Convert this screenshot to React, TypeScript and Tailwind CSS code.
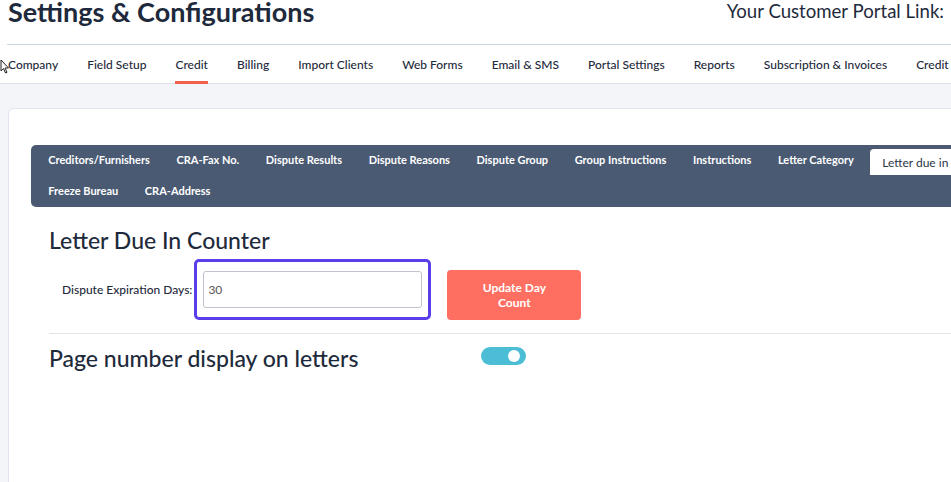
import { useState } from "react"

const mainTabs = [
  "Company",
  "Field Setup",
  "Credit",
  "Billing",
  "Import Clients",
  "Web Forms",
  "Email & SMS",
  "Portal Settings",
  "Reports",
  "Subscription & Invoices",
  "Credit Reports",
]

const creditTabsTop = [
  "Creditors/Furnishers",
  "CRA-Fax No.",
  "Dispute Results",
  "Dispute Reasons",
  "Dispute Group",
  "Group Instructions",
  "Instructions",
  "Letter Category",
]

const creditTabsBottom = ["Freeze Bureau", "CRA-Address"]

const App: React.FunctionComponent = () => {
  const [days, setDays] = useState("30")
  const [pageNumbers, setPageNumbers] = useState(true)

  return (
    <div className="relative h-[482px] w-[951px] overflow-hidden bg-[#f4f5f9] font-['Lato','Noto_Sans',sans-serif] text-[#1e2a3b]">
      {/* header */}
      <div className="bg-white">
        <div className="ml-[7px] flex h-[45px] items-start justify-between border-b border-[#cdd8e4] pl-[1px] pr-[7px]">
          <h1 className="text-[27px] font-bold leading-[24px] whitespace-nowrap">
            Settings &amp; Configurations
          </h1>
          <div className="pt-[1px] text-[18.6px] font-normal leading-[20px] whitespace-nowrap">
            Your Customer Portal Link:
          </div>
        </div>
        <nav className="flex h-[39px] gap-[29px] border-b border-[#dde2ea] pl-[8px] whitespace-nowrap">
          {mainTabs.map((tab) => (
            <div
              key={tab}
              className={
                "flex h-[39px] items-center border-b-[3px] pt-[3px] text-[12px] font-medium " +
                (tab === "Credit"
                  ? "border-[#f0624d]"
                  : "border-transparent")
              }
            >
              {tab}
            </div>
          ))}
        </nav>
      </div>

      {/* card */}
      <div className="ml-[8px] mt-[24px] w-[1000px] rounded-tl-[6px] border border-[#e1e5ee] bg-white pb-[120px] pl-[22px] pt-[36px]">
        <div className="rounded-l-[5px] bg-[#4a5a73] pb-[3px] pl-[4px] pt-[4px] text-[11px] font-bold text-white">
          <div className="flex h-[26px] whitespace-nowrap">
            {creditTabsTop.map((tab) => (
              <div key={tab} className="flex items-center px-[13.3px] pb-[3px]">
                {tab}
              </div>
            ))}
            <div className="ml-[3px] flex w-[100px] items-center rounded-t-[4px] bg-white px-[12px] pt-[1px] text-[12px] font-normal text-[#2a3547]">
              Letter due in
            </div>
          </div>
          <div className="mt-[3px] flex h-[26px] whitespace-nowrap">
            {creditTabsBottom.map((tab) => (
              <div key={tab} className="flex items-center px-[13.3px]">
                {tab}
              </div>
            ))}
          </div>
        </div>

        <div className="pl-[18px]">
          <h2 className="mt-[20px] text-[23px] font-medium leading-[26px]">
            Letter Due In Counter
          </h2>
          <div className="mt-[6px] flex items-center">
            <label className="pl-[13px] pr-[2px] text-[12px] font-medium text-[#1e2a3b]">
              Dispute Expiration Days:
            </label>
            <div className="rounded-[5px] border-[3px] border-[#5b3eea] px-[6px] py-[9px]">
              <input
                value={days}
                onChange={(e) => setDays(e.target.value)}
                className="h-[37px] w-[219px] rounded-[3px] border border-[#bfc3cc] px-[4px] text-[12px] text-[#555] outline-none"
              />
            </div>
            <button className="ml-[16px] mt-[11px] h-[50px] w-[134px] rounded-[4px] bg-[#ff6f61] text-[12px] font-bold leading-[15px] text-white">
              Update Day
              <br />
              Count
            </button>
          </div>
          <div className="mt-[13px] border-t border-[#e4e4e4]" />
          <div className="mt-[11px] flex items-center">
            <div className="w-[432px] text-[23px] font-medium leading-[26px]">
              Page number display on letters
            </div>
            <button
              onClick={() => setPageNumbers(!pageNumbers)}
              className={
                "relative -mt-[5px] h-[18px] w-[45px] rounded-full " +
                (pageNumbers ? "bg-[#4bbed6]" : "bg-[#ccc]")
              }
            >
              <span
                className={
                  "absolute top-[3px] h-[12px] w-[12px] rounded-full bg-white " +
                  (pageNumbers ? "right-[6px]" : "left-[6px]")
                }
              />
            </button>
          </div>
        </div>
      </div>

      {/* mouse pointer */}
      <svg
        className="absolute left-[-4px] top-[59px]"
        width="14"
        height="16"
        viewBox="0 0 14 16"
      >
        <path
          d="M5 1 L5 12 L7.5 9.5 L9.5 14 L11 13.3 L9 9 L12.5 9 Z"
          fill="white"
          stroke="#222"
          strokeWidth="1"
        />
      </svg>
    </div>
  )
}

export default App
